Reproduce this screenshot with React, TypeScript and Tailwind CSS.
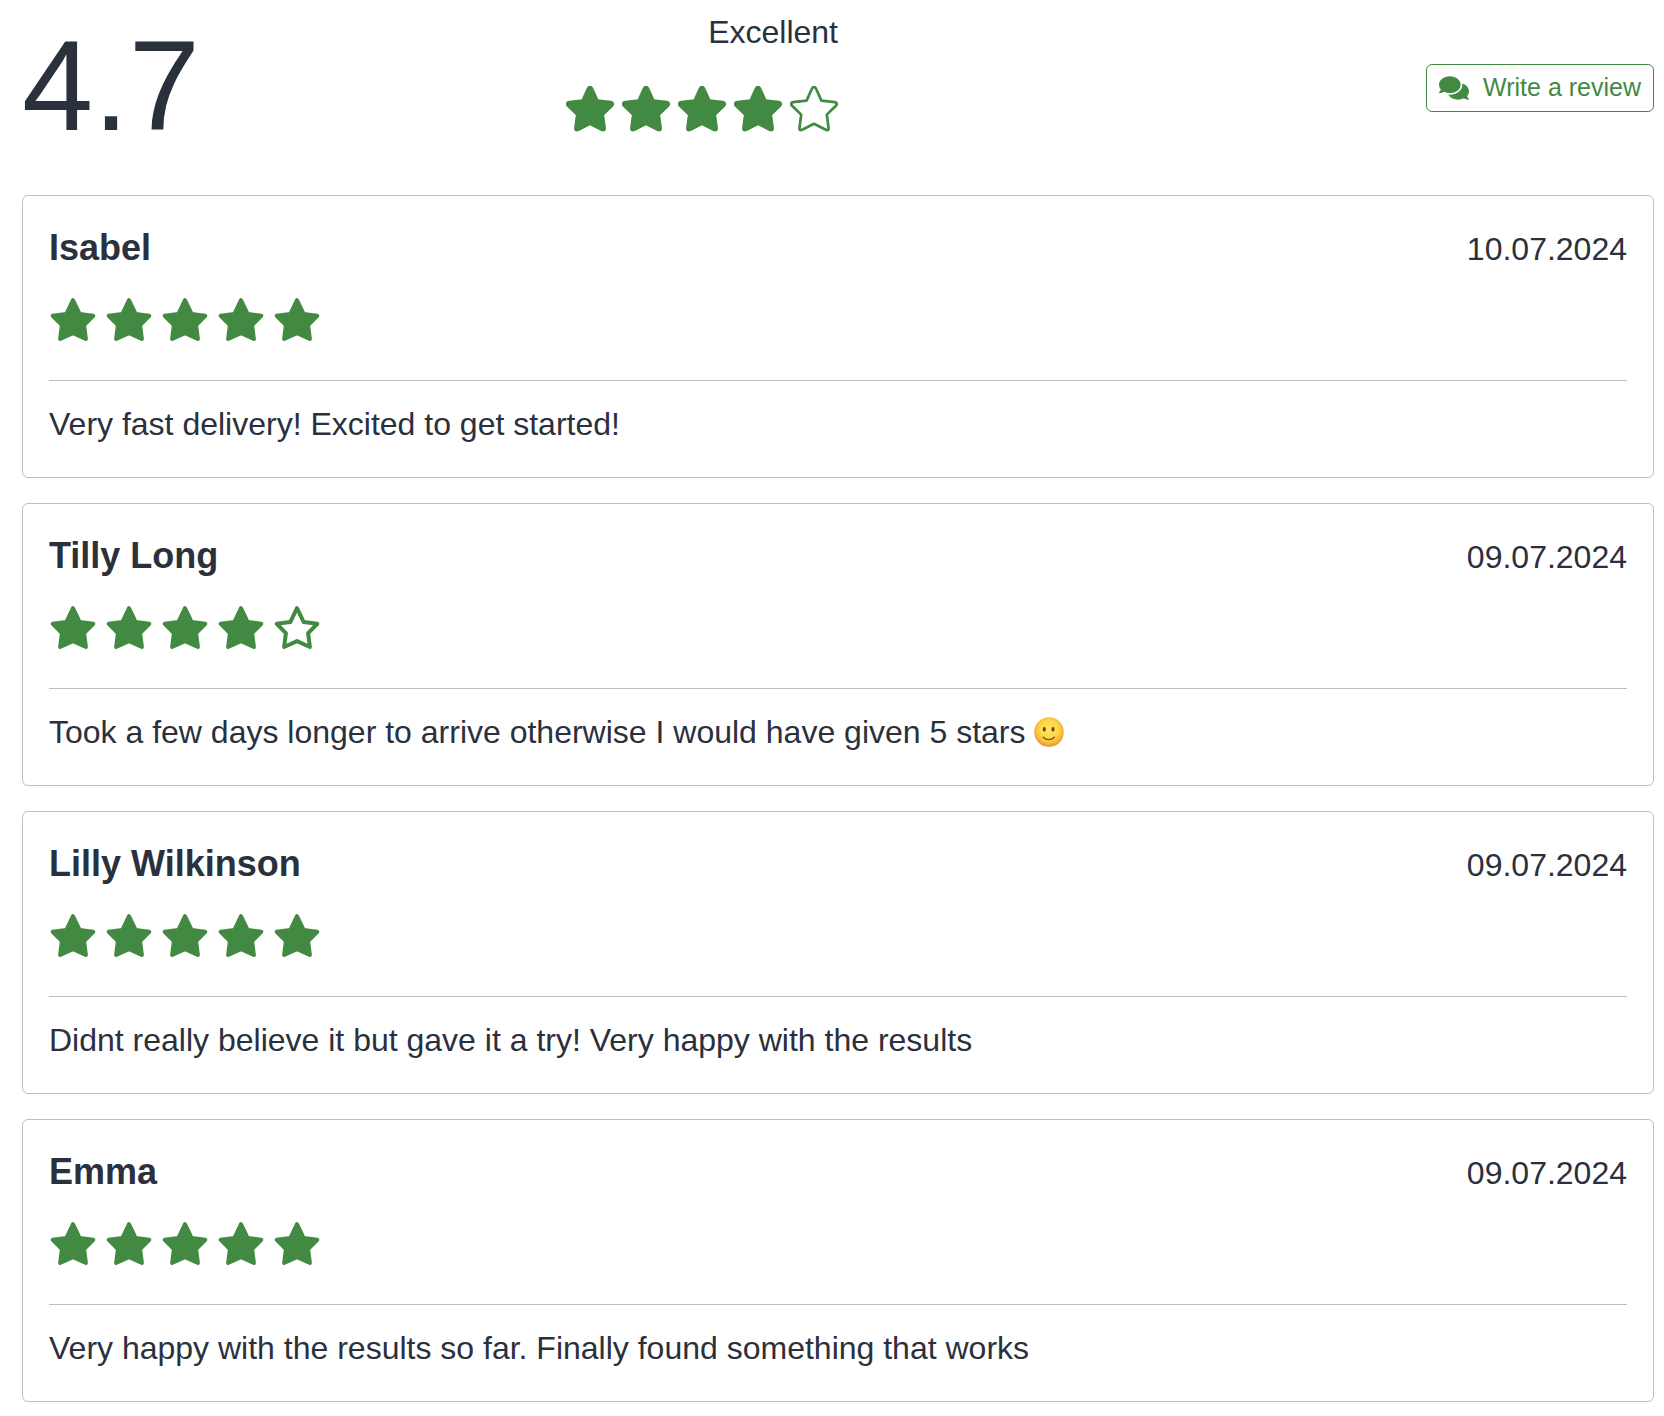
import React from 'react';
import { FaComments } from 'react-icons/fa';

interface Review {
  id: number;
  name: string;
  date: string;
  rating: number;
  text: string;
  smiley?: boolean;
}

const reviews: Review[] = [
  { id: 1, name: 'Isabel', date: '10.07.2024', rating: 5, text: 'Very fast delivery! Excited to get started!' },
  {
    id: 2,
    name: 'Tilly Long',
    date: '09.07.2024',
    rating: 4,
    text: 'Took a few days longer to arrive otherwise I would have given 5 stars',
    smiley: true
  },
  {
    id: 3,
    name: 'Lilly Wilkinson',
    date: '09.07.2024',
    rating: 5,
    text: 'Didnt really believe it but gave it a try! Very happy with the results'
  },
  {
    id: 4,
    name: 'Emma',
    date: '09.07.2024',
    rating: 5,
    text: 'Very happy with the results so far. Finally found something that works'
  }
];

// thin outline, used for the overall rating
const LARGE_STAR =
  'M24 3.2Q25.4 3.2 26.1 4.8L31.4 16.6L44.8 18.1Q46.6 18.4 46.8 19.5Q47 20.6 45.9 21.7L36.8 30.6L38.6 44.3Q38.7 46.2 37.1 46.1Q36.5 46.1 35.8 45.7L24 39.8L12.2 45.7Q11.5 46.1 10.9 46.1Q9.3 46.2 9.4 44.3L11.2 30.6L2.1 21.7Q1 20.6 1.2 19.5Q1.4 18.4 3.2 18.1L16.6 16.6L21.9 4.8Q22.6 3.2 24 3.2Z';

// thick outline, used inside the cards
const SMALL_STAR =
  'M24 4.2L30.7 18.1L44.3 19.8L35.1 29.2L36.9 43L24 37.1L11.1 43L12.9 29.2L3.7 19.8L17.3 18.1Z';

function Stars({ rating, large = false }: { rating: number; large?: boolean }) {
  return (
    <div className="flex gap-2" role="img" aria-label={`${rating} out of 5 stars`}>
      {[1, 2, 3, 4, 5].map(n => (
        <svg
          key={n}
          viewBox="0 0 48 48"
          className={`size-12 stroke-[#428a41] ${n <= rating ? 'fill-[#428a41]' : 'fill-none'}`}
          strokeWidth={large ? 2.7 : 4}
          strokeLinejoin="round"
        >
          <path d={large ? LARGE_STAR : SMALL_STAR} />
        </svg>
      ))}
    </div>
  );
}

function Smiley() {
  return (
    <svg viewBox="0 0 30 30" className="size-[30px]" role="img" aria-label="Smiling face">
      <defs>
        <radialGradient id="face" cx="50%" cy="42%" r="58%">
          <stop offset="0%" stopColor="#ffe75f" />
          <stop offset="55%" stopColor="#fed648" />
          <stop offset="85%" stopColor="#f5b13c" />
          <stop offset="100%" stopColor="#de8a2b" />
        </radialGradient>
      </defs>
      <circle cx="15" cy="15" r="14.8" fill="url(#face)" />
      <ellipse cx="10.3" cy="12.3" rx="1.5" ry="2.4" fill="#6b4013" />
      <ellipse cx="19" cy="12.3" rx="1.5" ry="2.4" fill="#6b4013" />
      <path d="M9.2 20.2Q14.8 25 20.4 20.2" fill="none" stroke="#7a4a15" strokeWidth="1.3" strokeLinecap="round" />
    </svg>
  );
}

function ReviewCard({ review }: { review: Review }) {
  return (
    <article className="rounded-md border border-[#bfbfbf] px-[26px] pt-[26px] pb-[29px]">
      <div className="flex items-baseline justify-between">
        <h2 className="text-[36px] leading-[52px] font-bold">{review.name}</h2>
        <time className="text-[32px] leading-[48px]">{review.date}</time>
      </div>
      <div className="mt-[22px] border-b border-[#bfbfbf] pb-9">
        <Stars rating={review.rating} />
      </div>
      <p className="mt-[19px] flex items-center gap-2 text-[32px] leading-[48px]">
        {review.text}
        {review.smiley && <Smiley />}
      </p>
    </article>
  );
}

export default function App() {
  return (
    <main className="min-h-screen bg-white pr-[10px] pb-[14px] pl-[22px] font-['Liberation_Sans',Arial,sans-serif] text-[#2b303d]">
      <header className="grid grid-cols-2 pt-2">
        <div className="flex justify-between">
          <div className="pt-[14px] text-9xl leading-[128px]">4.7</div>
          <div className="flex flex-col items-end gap-7">
            <p className="text-[32px] leading-[48px]">Excellent</p>
            <Stars rating={4} large />
          </div>
        </div>
        <div className="flex items-start justify-end pt-14">
          <button
            type="button"
            className="flex h-12 items-center gap-3.5 rounded-md border border-[#428a41] px-3 text-[25px] text-[#428a41]"
          >
            <FaComments size={30} />
            Write a review
          </button>
        </div>
      </header>

      <section className="mt-[45px] flex flex-col gap-[25px]">
        {reviews.map(review => (
          <ReviewCard key={review.id} review={review} />
        ))}
      </section>
    </main>
  );
}
